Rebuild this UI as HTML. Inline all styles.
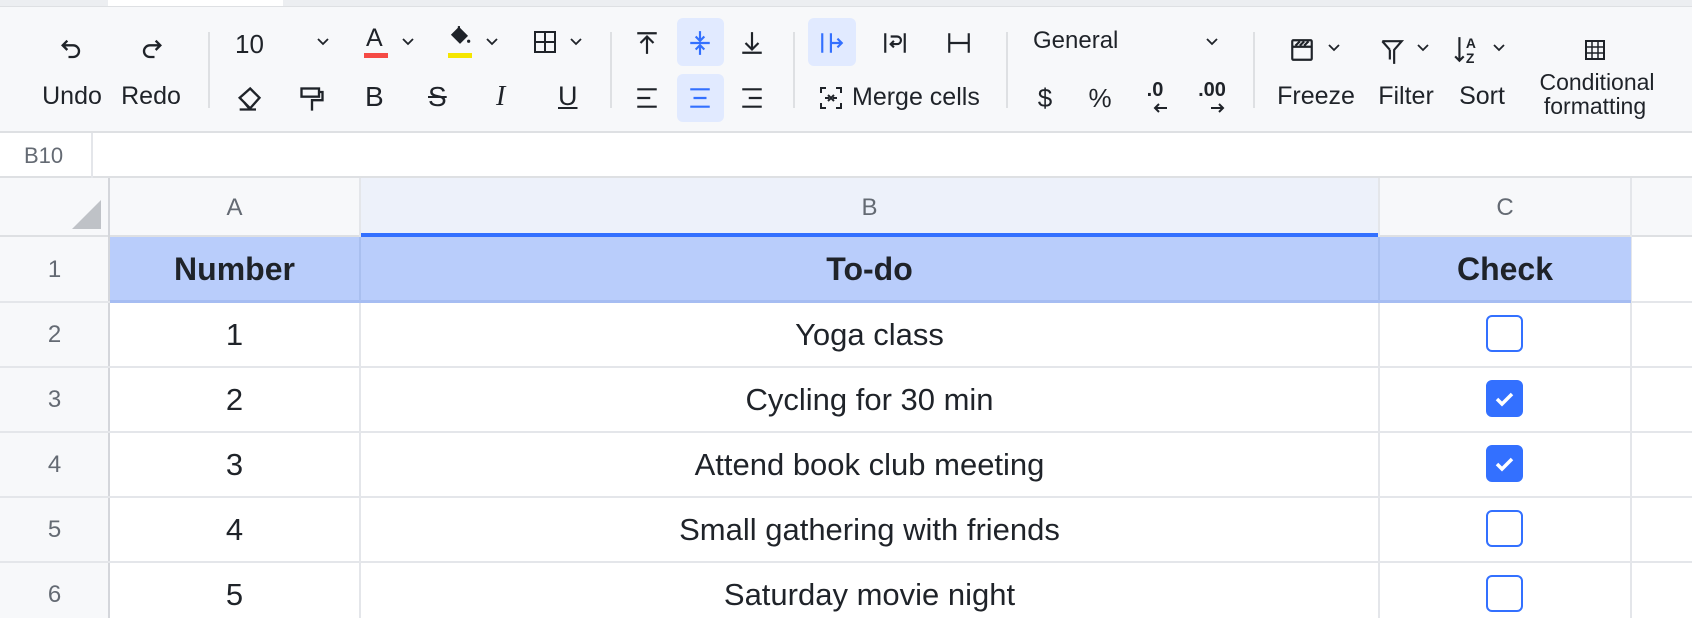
<!DOCTYPE html>
<html><head><meta charset="utf-8"><style>
*{margin:0;padding:0;box-sizing:border-box}
body{width:1692px;height:618px;overflow:hidden;background:#fff;font-family:"Liberation Sans",Arial,sans-serif;position:relative;color:#1f2329}
.a{position:absolute}
.lbl{position:absolute;font-size:25px;color:#1f2329;transform:translateX(-50%);white-space:nowrap;line-height:1}
.ic{position:absolute;transform:translate(-50%,-50%)}
.sep{position:absolute;width:2px;background:#dee0e3;top:32px;height:76px}
.hl{position:absolute;background:#e1eaff;border-radius:6px}
.chev{position:absolute;transform:translate(-50%,-50%)}
.cell{position:absolute;font-size:31px;text-align:center;line-height:65px;height:65px}
.rn{position:absolute;left:0;width:109px;text-align:center;font-size:24px;color:#646a73;line-height:65px}
.hline{position:absolute;left:0;width:1692px;height:2px;background:#e4e6ea}
.cb{position:absolute;width:37px;height:37px;border:2px solid #3370ff;border-radius:6px;left:1486px;background:#fff}
.cb.on{background:#3370ff}
</style></head><body>
<div class="a" style="left:0;top:0;width:1692px;height:6px;background:#eceef1"></div>
<div class="a" style="left:108px;top:0;width:175px;height:6px;background:#fff"></div>
<div class="a" style="left:0;top:6px;width:1692px;height:127px;background:#f7f8fa;border-top:1px solid #dee0e3;border-bottom:2px solid #dee0e3"></div>

<svg class="ic" style="left:72px;top:50px" width="28" height="28" viewBox="0 0 24 24" fill="none" stroke="#1f2329" stroke-width="2"><path d="M8 4L4 8l4 4"/><path d="M4 8h9a5 5 0 0 1 0 10H9"/></svg>
<div class="lbl" style="left:72px;top:84px">Undo</div>
<svg class="ic" style="left:151px;top:50px" width="28" height="28" viewBox="0 0 24 24" fill="none" stroke="#1f2329" stroke-width="2"><path d="M16 4l4 4-4 4"/><path d="M20 8h-9a5 5 0 0 0 0 10h4"/></svg>
<div class="lbl" style="left:151px;top:84px">Redo</div>
<div class="sep" style="left:208px"></div>

<div class="a" style="left:235px;top:29px;font-size:26px">10</div>
<svg class="chev" style="left:323px;top:42px" width="16" height="10" viewBox="0 0 16 10" fill="none" stroke="#1f2329" stroke-width="1.8"><path d="M3 2l5 5 5-5"/></svg>
<div class="a" style="left:366px;top:26px;font-size:25px;line-height:1">A</div>
<div class="a" style="left:364px;top:53px;width:24px;height:5px;background:#f54a45"></div>
<svg class="chev" style="left:408px;top:42px" width="16" height="10" viewBox="0 0 16 10" fill="none" stroke="#1f2329" stroke-width="1.8"><path d="M3 2l5 5 5-5"/></svg>
<svg class="ic" style="left:460px;top:38px" width="26" height="24" viewBox="0 0 24 22" fill="none" stroke="#1f2329" stroke-width="2"><path d="M11 2l7 7-6 6-7-7z" fill="#1f2329"/><path d="M11 2V0"/><circle cx="20" cy="14" r="1.5" fill="#1f2329" stroke="none"/></svg>
<div class="a" style="left:448px;top:53px;width:24px;height:5px;background:#f5e600"></div>
<svg class="chev" style="left:492px;top:42px" width="16" height="10" viewBox="0 0 16 10" fill="none" stroke="#1f2329" stroke-width="1.8"><path d="M3 2l5 5 5-5"/></svg>
<svg class="ic" style="left:545px;top:42px" width="24" height="24" viewBox="0 0 24 24" fill="none" stroke="#1f2329" stroke-width="2"><rect x="2" y="2" width="20" height="20"/><path d="M12 2v20M2 12h20"/></svg>
<svg class="chev" style="left:576px;top:42px" width="16" height="10" viewBox="0 0 16 10" fill="none" stroke="#1f2329" stroke-width="1.8"><path d="M3 2l5 5 5-5"/></svg>

<svg class="ic" style="left:249px;top:99px" width="28" height="28" viewBox="0 0 24 24" fill="none" stroke="#1f2329" stroke-width="2"><path d="M13 3l8 8-8 9-9-9z"/><path d="M8 15l4 5"/><path d="M4 21h14"/></svg>
<svg class="ic" style="left:312px;top:99px" width="28" height="28" viewBox="0 0 24 24" fill="none" stroke="#1f2329" stroke-width="2"><rect x="3" y="3" width="15" height="7"/><path d="M18 6h3v7h-9v3M12 16v6"/></svg>
<div class="a" style="left:365px;top:83px;font-size:28px;line-height:1">B</div>
<div class="a" style="left:428px;top:83px;font-size:28px;line-height:1;text-decoration:line-through">S</div>
<div class="a" style="left:496px;top:83px;font-size:28px;line-height:1;font-family:'Liberation Serif',serif;font-style:italic">I</div>
<div class="a" style="left:558px;top:83px;font-size:27px;line-height:1;text-decoration:underline">U</div>
<div class="sep" style="left:610px"></div>

<div class="hl" style="left:677px;top:18px;width:47px;height:48px"></div>
<div class="hl" style="left:677px;top:74px;width:47px;height:48px"></div>
<svg class="ic" style="left:647px;top:43px" width="26" height="26" viewBox="0 0 24 24" fill="none" stroke="#1f2329" stroke-width="2"><path d="M3 3h18M12 22V7M6 12l6-6 6 6"/></svg>
<svg class="ic" style="left:700px;top:43px" width="26" height="26" viewBox="0 0 24 24" fill="none" stroke="#3370ff" stroke-width="2"><path d="M3 12h18M12 1v8M8 6l4 4 4-4M12 23v-8M8 18l4-4 4 4"/></svg>
<svg class="ic" style="left:752px;top:43px" width="26" height="26" viewBox="0 0 24 24" fill="none" stroke="#1f2329" stroke-width="2"><path d="M3 21h18M12 2v15M6 12l6 6 6-6"/></svg>
<svg class="ic" style="left:647px;top:98px" width="26" height="26" viewBox="0 0 24 24" fill="none" stroke="#1f2329" stroke-width="2"><path d="M3 4h18M3 12h12M3 20h18"/></svg>
<svg class="ic" style="left:700px;top:98px" width="26" height="26" viewBox="0 0 24 24" fill="none" stroke="#3370ff" stroke-width="2"><path d="M3 4h18M6 12h12M3 20h18"/></svg>
<svg class="ic" style="left:752px;top:98px" width="26" height="26" viewBox="0 0 24 24" fill="none" stroke="#1f2329" stroke-width="2"><path d="M3 4h18M9 12h12M3 20h18"/></svg>
<div class="sep" style="left:793px"></div>

<div class="hl" style="left:808px;top:18px;width:48px;height:48px"></div>
<svg class="ic" style="left:832px;top:43px" width="26" height="26" viewBox="0 0 24 24" fill="none" stroke="#3370ff" stroke-width="2"><path d="M3 3v18M11 3v18M11 12h10M17 8l4 4-4 4"/></svg>
<svg class="ic" style="left:895px;top:43px" width="26" height="26" viewBox="0 0 24 24" fill="none" stroke="#1f2329" stroke-width="2"><path d="M3 3v18M21 3v18M8 6h6a3 3 0 0 1 0 7H9M11 10l-3 3 3 3"/></svg>
<svg class="ic" style="left:959px;top:43px" width="26" height="26" viewBox="0 0 24 24" fill="none" stroke="#1f2329" stroke-width="2"><path d="M3 3v18M21 3v18M3 12h18"/></svg>
<svg class="ic" style="left:831px;top:98px" width="24" height="24" viewBox="0 0 24 24" fill="none" stroke="#1f2329" stroke-width="2"><path d="M2 7V2h5M17 2h5v5M22 17v5h-5M7 22H2v-5M6 12h4M14 12h4M9 9l3 3-3 3M15 9l-3 3 3 3"/></svg>
<div class="a" style="left:852px;top:85px;font-size:25px;line-height:1">Merge cells</div>
<div class="sep" style="left:1006px"></div>

<div class="a" style="left:1033px;top:29px;font-size:24px;line-height:1">General</div>
<svg class="chev" style="left:1212px;top:42px" width="16" height="10" viewBox="0 0 16 10" fill="none" stroke="#1f2329" stroke-width="1.8"><path d="M3 2l5 5 5-5"/></svg>
<div class="lbl" style="left:1045px;top:85px;font-size:26px">$</div>
<div class="lbl" style="left:1100px;top:85px;font-size:26px">%</div>
<div class="lbl" style="left:1155px;top:80px;font-size:20px;font-weight:bold">.0</div>
<svg class="ic" style="left:1160px;top:108px" width="16" height="10" viewBox="0 0 16 10" fill="none" stroke="#1f2329" stroke-width="2"><path d="M15 5H3M7 1L3 5l4 4"/></svg>
<div class="lbl" style="left:1212px;top:80px;font-size:20px;font-weight:bold">.00</div>
<svg class="ic" style="left:1218px;top:108px" width="16" height="10" viewBox="0 0 16 10" fill="none" stroke="#1f2329" stroke-width="2"><path d="M1 5h12M9 1l4 4-4 4"/></svg>
<div class="sep" style="left:1253px"></div>

<svg class="ic" style="left:1302px;top:50px" width="26" height="26" viewBox="0 0 24 24" fill="none" stroke="#1f2329" stroke-width="2"><rect x="3" y="3" width="18" height="18" rx="1"/><path d="M3 9h18M6 8l4-4M10 8l4-4M14 8l4-4"/></svg>
<svg class="chev" style="left:1334px;top:48px" width="16" height="10" viewBox="0 0 16 10" fill="none" stroke="#1f2329" stroke-width="1.8"><path d="M3 2l5 5 5-5"/></svg>
<div class="lbl" style="left:1316px;top:84px">Freeze</div>
<svg class="ic" style="left:1392px;top:52px" width="26" height="28" viewBox="0 0 24 26" fill="none" stroke="#1f2329" stroke-width="2"><path d="M3 3h18l-7 8v13M10 11v9"/><path d="M3 3l7 8"/></svg>
<svg class="chev" style="left:1423px;top:48px" width="16" height="10" viewBox="0 0 16 10" fill="none" stroke="#1f2329" stroke-width="1.8"><path d="M3 2l5 5 5-5"/></svg>
<div class="lbl" style="left:1406px;top:84px">Filter</div>
<svg class="ic" style="left:1468px;top:50px" width="28" height="30" viewBox="0 0 26 28" fill="none" stroke="#1f2329" stroke-width="2"><path d="M5 2v22M1 20l4 4 4-4"/><text x="11" y="12" font-size="13" font-weight="bold" fill="#1f2329" stroke="none" font-family="Liberation Sans">A</text><text x="11" y="26" font-size="13" font-weight="bold" fill="#1f2329" stroke="none" font-family="Liberation Sans">Z</text></svg>
<svg class="chev" style="left:1499px;top:48px" width="16" height="10" viewBox="0 0 16 10" fill="none" stroke="#1f2329" stroke-width="1.8"><path d="M3 2l5 5 5-5"/></svg>
<div class="lbl" style="left:1482px;top:84px">Sort</div>
<svg class="ic" style="left:1595px;top:50px" width="22" height="22" viewBox="0 0 22 22" fill="none" stroke="#1f2329" stroke-width="2"><rect x="2" y="2" width="18" height="18"/><path d="M2 8h18M2 14h18M8 2v18M14 2v18" stroke-width="1.5"/></svg>
<div class="lbl" style="left:1597px;top:71px;font-size:23px">Conditional</div>
<div class="lbl" style="left:1595px;top:95px;font-size:23px">formatting</div>

<div class="a" style="left:0;top:133px;width:1692px;height:45px;background:#fff;border-bottom:2px solid #dee0e3"></div>
<div class="a" style="left:91px;top:133px;width:2px;height:45px;background:#e4e6ea"></div>
<div class="a" style="left:24px;top:145px;font-size:22px;color:#646a73;line-height:1">B10</div>

<div class="a" style="left:0;top:178px;width:1692px;height:59px;background:#f7f8fa;border-bottom:2px solid #dee0e3"></div>
<div class="a" style="left:360px;top:178px;width:1019px;height:59px;background:#edf1fa"></div>
<div class="a" style="left:360px;top:233px;width:1019px;height:4px;background:#3370ff"></div>
<svg class="a" style="left:72px;top:200px" width="29" height="29"><path d="M29 0V29H0z" fill="#bfc2c7"/></svg>
<div class="a" style="left:108px;top:178px;width:2px;height:440px;background:#d4d6db"></div>
<div class="a" style="left:359px;top:178px;width:2px;height:440px;background:#e4e6ea"></div>
<div class="a" style="left:1378px;top:178px;width:2px;height:440px;background:#e4e6ea"></div>
<div class="a" style="left:1630px;top:178px;width:2px;height:440px;background:#e4e6ea"></div>
<div class="a" style="left:109px;top:178px;width:251px;text-align:center;line-height:59px;font-size:24px;color:#646a73">A</div>
<div class="a" style="left:360px;top:178px;width:1019px;text-align:center;line-height:59px;font-size:24px;color:#646a73">B</div>
<div class="a" style="left:1379px;top:178px;width:252px;text-align:center;line-height:59px;font-size:24px;color:#646a73">C</div>

<div class="a" style="left:0;top:237px;width:108px;height:381px;background:#f7f8fa"></div>
<div class="a" style="left:110px;top:237px;width:1521px;height:65px;background:#b9cdfb;border-bottom:2px solid #a6bdf2"></div>
<div class="a" style="left:359px;top:237px;width:2px;height:65px;background:#a9bfef"></div>
<div class="a" style="left:1378px;top:237px;width:2px;height:65px;background:#a9bfef"></div>

<div class="hline" style="top:301px"></div>
<div class="hline" style="top:366px"></div>
<div class="hline" style="top:431px"></div>
<div class="hline" style="top:496px"></div>
<div class="hline" style="top:561px"></div>
<div class="a" style="left:110px;top:301px;width:1521px;height:2px;background:#a6bdf2"></div>

<div class="rn" style="top:237px">1</div>
<div class="rn" style="top:302px">2</div>
<div class="rn" style="top:367px">3</div>
<div class="rn" style="top:432px">4</div>
<div class="rn" style="top:497px">5</div>
<div class="rn" style="top:562px">6</div>

<div class="cell" style="left:109px;width:251px;top:237px;font-weight:bold;font-size:32px">Number</div>
<div class="cell" style="left:360px;width:1019px;top:237px;font-weight:bold;font-size:32px">To-do</div>
<div class="cell" style="left:1379px;width:252px;top:237px;font-weight:bold;font-size:32px">Check</div>

<div class="cell" style="left:109px;width:251px;top:302px">1</div>
<div class="cell" style="left:109px;width:251px;top:367px">2</div>
<div class="cell" style="left:109px;width:251px;top:432px">3</div>
<div class="cell" style="left:109px;width:251px;top:497px">4</div>
<div class="cell" style="left:109px;width:251px;top:562px">5</div>

<div class="cell" style="left:360px;width:1019px;top:302px">Yoga class</div>
<div class="cell" style="left:360px;width:1019px;top:367px">Cycling for 30 min</div>
<div class="cell" style="left:360px;width:1019px;top:432px">Attend book club meeting</div>
<div class="cell" style="left:360px;width:1019px;top:497px">Small gathering with friends</div>
<div class="cell" style="left:360px;width:1019px;top:562px">Saturday movie night</div>

<div class="cb" style="top:315px"></div>
<div class="cb on" style="top:380px"><svg width="33" height="33" viewBox="0 0 33 33"><path d="M9 17l5 5 10-10" fill="none" stroke="#fff" stroke-width="3.5"/></svg></div>
<div class="cb on" style="top:445px"><svg width="33" height="33" viewBox="0 0 33 33"><path d="M9 17l5 5 10-10" fill="none" stroke="#fff" stroke-width="3.5"/></svg></div>
<div class="cb" style="top:510px"></div>
<div class="cb" style="top:575px"></div>
</body></html>
